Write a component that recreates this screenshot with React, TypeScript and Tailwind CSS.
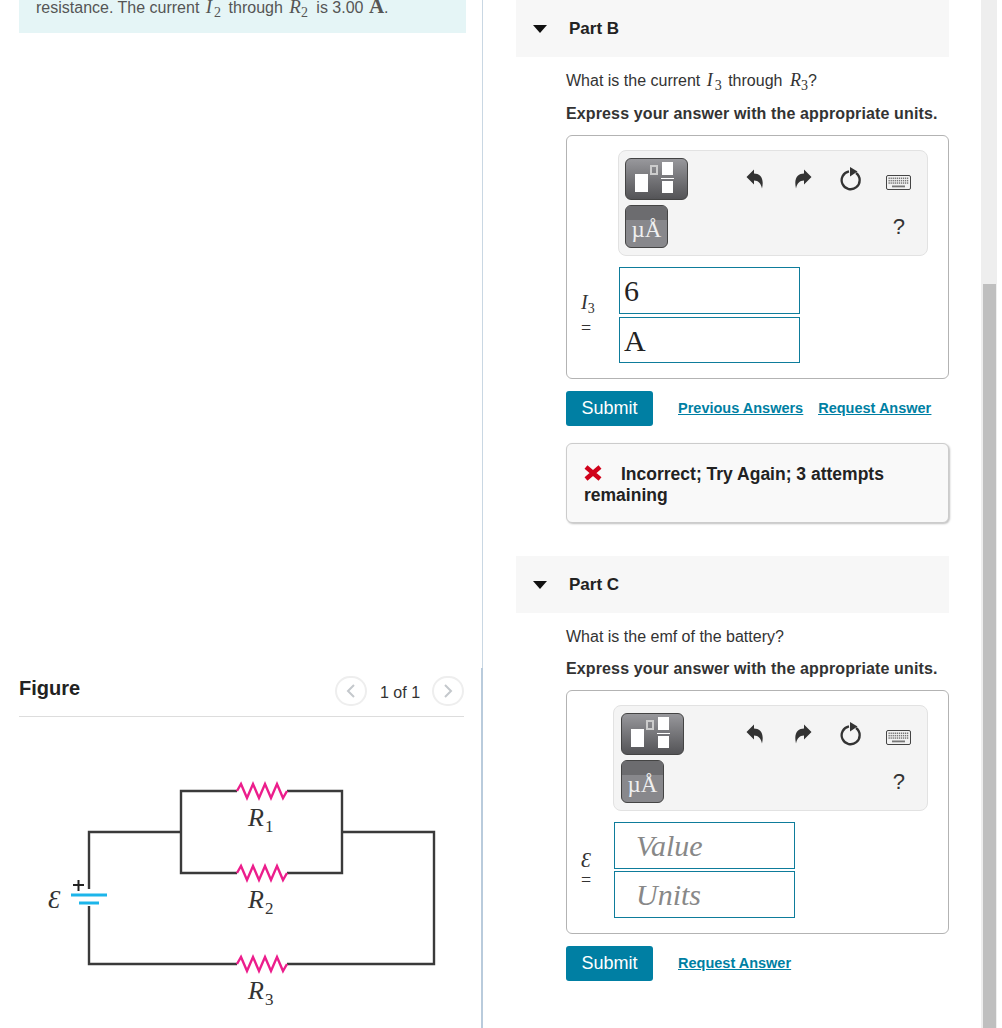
import { ReactNode } from 'react'

const serif = "font-['Liberation_Serif',serif]"

function UndoIcon({ flip = false }: { flip?: boolean }) {
  return (
    <svg width="18" height="20" viewBox="0 0 18 20" className={flip ? '-scale-x-100' : ''}>
      <path d="M0.5 8 L8 0.5 V4.5 C14 4.5 18.500 9 16 19.500 C15 14.500 12.500 11.500 8 11.500 V15.500 Z" fill="#333" />
    </svg>
  )
}

function ResetIcon() {
  return (
    <svg width="22" height="24" viewBox="0 0 22 24">
      <path d="M9 4.400 A9 9 0 1 0 16 6" fill="none" stroke="#333" strokeWidth="2.300" />
      <path d="M10 0 L17.500 4.500 L10 9.500 Z" fill="#333" />
    </svg>
  )
}

function KeyboardIcon() {
  const rows = [0, 1, 2]
  const keys = [0, 1, 2, 3, 4, 5, 6, 7, 8, 9]
  return (
    <svg width="25" height="15" viewBox="0 0 25 15" className="-ml-[2px] mt-[6px]">
      <rect x="0.5" y="0.5" width="24" height="14" rx="1.500" fill="#f2f2f2" stroke="#444" />
      {rows.map((r) =>
        keys.map((k) => <rect key={`${r}-${k}`} x={2.5 + k * 2.05} y={2.5 + r * 2.4} width="1.300" height="1.500" fill="#777" />),
      )}
      <rect x="6" y="10.500" width="13" height="1.800" fill="#777" />
    </svg>
  )
}

function FractionButton() {
  return (
    <div className="relative h-[42px] w-[63px] rounded-md border border-[#444] bg-linear-to-b from-[#98989c] to-[#545457]">
      <div className="absolute left-[9px] top-[15px] h-[18px] w-[13px] bg-white" />
      <div className="absolute left-[24px] top-[6px] h-[10px] w-[8px] border-2 border-[#ccc]" />
      <div className="absolute left-[36px] top-[3px] h-[13px] w-[11px] bg-white" />
      <div className="absolute left-[35px] top-[19px] h-px w-[13px] bg-white" />
      <div className="absolute left-[36px] top-[22px] h-[12px] w-[11px] bg-white" />
    </div>
  )
}

function UnitButton() {
  return (
    <div className="relative h-[43px] w-[43px] overflow-hidden rounded-md border border-[#444] bg-[#88888c]">
      <div className="h-[14px] bg-[#6c6c6f]" />
      <span className={`${serif} absolute inset-x-0 top-[10px] text-center text-[23px] leading-[28px] text-[#f0f0f0]`}>µÅ</span>
    </div>
  )
}

function Toolbar({ marginLeft, width, pad }: { marginLeft: string; width: string; pad: string }) {
  return (
    <div className={`${marginLeft} ${width} ${pad} mt-[14px] flex h-[106px] flex-col gap-[5px] rounded-lg border border-[#e2e2e2] bg-[#f4f4f4] pt-[7px]`}>
      <div className="flex items-center">
        <FractionButton />
        <div className="ml-auto mr-[4px] flex items-center">
          <div className="flex w-[48px] justify-center">
            <UndoIcon />
          </div>
          <div className="flex w-[48px] justify-center">
            <UndoIcon flip />
          </div>
          <div className="flex w-[48px] justify-center">
            <ResetIcon />
          </div>
          <div className="flex w-[48px] justify-center">
            <KeyboardIcon />
          </div>
        </div>
      </div>
      <div className="flex items-center">
        <UnitButton />
        <span className="ml-auto mr-[22px] text-[22px] text-[#333]">?</span>
      </div>
    </div>
  )
}

function Field({ children, muted = false, height }: { children: string; muted?: boolean; height: string }) {
  return (
    <div className={`${height} ${serif} flex w-[181px] items-center border border-[#0e7c9b] bg-white text-[30px] ${muted ? 'pl-[21px] italic text-[#888]' : 'pl-[4px] text-[#222]'}`}>
      {children}
    </div>
  )
}

function PartHeader({ title }: { title: string }) {
  return (
    <div className="flex h-[57px] items-center bg-[#f7f7f7] pl-[17px]">
      <svg width="14" height="8" viewBox="0 0 14 8">
        <path d="M0 0 H14 L7 8 Z" fill="#111" />
      </svg>
      <span className="ml-[22px] text-[17px] font-bold text-[#222]">{title}</span>
    </div>
  )
}

function Question({ children, gap }: { children: ReactNode; gap: string }) {
  return (
    <div className="ml-[50px] text-[16px] leading-[20px] text-[#333]">
      <p>{children}</p>
      <p className={`${gap} font-bold tracking-[0.13px]`}>Express your answer with the appropriate units.</p>
    </div>
  )
}

function SubmitRow({ previous = false }: { previous?: boolean }) {
  return (
    <div className="ml-[50px] mt-[12px] flex h-[35px] items-center">
      <button className="h-[35px] w-[87px] rounded-[3px] bg-[#007fa3] text-[18px] text-white">Submit</button>
      <div className="ml-[25px] flex gap-[15px] text-[14.5px] font-bold text-[#007fa3] underline">
        {previous && <a>Previous Answers</a>}
        <a>Request Answer</a>
      </div>
    </div>
  )
}

function Circuit() {
  const zig = (y: number) =>
    `M237 ${y} L241 ${y - 7} L247 ${y + 7} L253 ${y - 7} L259 ${y + 7} L265 ${y - 7} L271 ${y + 7} L277 ${y - 7} L283 ${y + 7} L287 ${y}`
  return (
    <svg width="460" height="311" viewBox="0 717 460 311" className="block">
      <g fill="none" stroke="#3a3a3a" strokeWidth="2.400">
        <path d="M237 791 H181 V873 H237 M287 791 H342 V873 H287" />
        <path d="M181 832 H89 V889 M89 906 V964 H237 M287 964 H434 V832 H342" />
      </g>
      <g fill="none" stroke="#ec1e8c" strokeWidth="2.400">
        <path d={zig(791)} />
        <path d={zig(873)} />
        <path d={zig(964)} />
      </g>
      <path d="M71 895 H107 M79 903 H99" stroke="#1cb5ea" strokeWidth="3" />
      <path d="M73 885 H84 M78.500 880 V891" stroke="#222" strokeWidth="2" />
      <g fontFamily="Liberation Serif" fill="#333">
        <text x="48" y="908" fontSize="25" fontStyle="italic">Ɛ</text>
        <text x="248" y="826" fontSize="26" fontStyle="italic">R</text>
        <text x="265" y="832" fontSize="17">1</text>
        <text x="248" y="908" fontSize="26" fontStyle="italic">R</text>
        <text x="265" y="914" fontSize="17">2</text>
        <text x="248" y="999" fontSize="26" fontStyle="italic">R</text>
        <text x="265" y="1005" fontSize="17">3</text>
      </g>
    </svg>
  )
}

function PagerButton({ dir }: { dir: 'left' | 'right' }) {
  return (
    <div className="flex h-[30px] w-[32px] items-center justify-center rounded-full border-2 border-[#eee]">
      <svg width="10" height="14" viewBox="0 0 10 14">
        <path d={dir === 'left' ? 'M8 1 L2 7 L8 13' : 'M2 1 L8 7 L2 13'} fill="none" stroke="#c4c8cc" strokeWidth="2" />
      </svg>
    </div>
  )
}

function LeftPane() {
  return (
    <div className="flex w-[481px] shrink-0 flex-col">
      <div className="ml-[19px] mr-[15px] h-[33px] overflow-hidden bg-[#e5f5f6] pl-[17px]">
        <p className="-mt-[4px] whitespace-nowrap text-[16px] leading-[21px] text-[#555]">
          resistance. The current <span className={`${serif} ml-[2px] text-[19px] italic`}>I</span>
          <sub className={`${serif} ml-[2px] mr-[3px] text-[14px]`}>2</sub> through{' '}
          <span className={`${serif} ml-[2px] text-[19px] italic`}>R</span>
          <sub className={`${serif} mr-[4px] text-[14px]`}>2</sub> is 3.00{' '}
          <span className={`${serif} ml-[1px] text-[21px] font-bold`}>A</span>.
        </p>
      </div>
      <div className="ml-[19px] mr-[17px] mt-[643px] flex h-[41px] items-start justify-between border-b border-[#ddd]">
        <span className="text-[20px] font-bold leading-[24px] text-[#222]">Figure</span>
        <div className="flex items-center gap-[13px] text-[16px] text-[#333]">
          <PagerButton dir="left" />
          <span className="w-[39px] translate-y-[2px] whitespace-nowrap">1 of 1</span>
          <PagerButton dir="right" />
        </div>
      </div>
      <Circuit />
    </div>
  )
}

function RightPane() {
  return (
    <div className="ml-[33px] flex w-[433px] shrink-0 flex-col">
      <PartHeader title="Part B" />
      <div className="mt-[13px]">
        <Question gap="mt-[13px]">
          What is the current <span className={`${serif} ml-[2px] text-[18px] italic`}>I</span>
          <sub className={`${serif} ml-[2px] mr-[2px] text-[14px]`}>3</sub> through{' '}
          <span className={`${serif} ml-[3px] text-[18px] italic`}>R</span>
          <sub className={`${serif} text-[14px]`}>3</sub>?
        </Question>
      </div>
      <div className="ml-[50px] mt-[11px] h-[244px] rounded-md border border-[#b3b3b3]">
        <Toolbar marginLeft="ml-[51px]" width="w-[310px]" pad="pl-[6px]" />
        <div className="ml-[14px] mt-[11px] flex items-center">
          <div className={`${serif} w-[38px] text-[20px] leading-[22px] text-[#333]`}>
            <div className="italic">
              I<sub className="text-[14px] not-italic">3</sub>
            </div>
            <div className="mt-[4px] text-[18px]">=</div>
          </div>
          <div className="flex flex-col gap-[3px]">
            <Field height="h-[47px]">6</Field>
            <Field height="h-[46px]">A</Field>
          </div>
        </div>
      </div>
      <SubmitRow previous />
      <div className="ml-[50px] mt-[17px] h-[80px] rounded-md border border-[#ccc] bg-[#f9f9f9] pl-[17px] pt-[20px] text-[17.5px] font-bold leading-[21px] text-[#222] shadow-[1px_1px_2px_rgba(0,0,0,0.25)]">
        <svg width="18" height="16" viewBox="0 0 18 16" className="mr-[19px] inline-block align-[-1px]">
          <path d="M2 2 L16 14 M16 2 L2 14" stroke="#d0021b" strokeWidth="4.500" />
        </svg>
        Incorrect; Try Again; 3 attempts remaining
      </div>
      <div className="mt-[33px]">
        <PartHeader title="Part C" />
      </div>
      <div className="mt-[14px]">
        <Question gap="mt-[12px]">What is the emf of the battery?</Question>
      </div>
      <div className="ml-[50px] mt-[11px] h-[244px] rounded-md border border-[#b3b3b3]">
        <Toolbar marginLeft="ml-[46px]" width="w-[315px]" pad="pl-[7px]" />
        <div className="ml-[14px] mt-[11px] flex items-center">
          <div className={`${serif} w-[33px] text-[20px] leading-[20px] text-[#333]`}>
            <div className="italic">Ɛ</div>
            <div className="text-[18px]">=</div>
          </div>
          <div className="flex flex-col gap-[2px]">
            <Field muted height="h-[47px]">Value</Field>
            <Field muted height="h-[47px]">Units</Field>
          </div>
        </div>
      </div>
      <SubmitRow />
    </div>
  )
}

export default function App() {
  return (
    <div className="flex h-[1028px] w-[1002px] overflow-hidden bg-white font-['Liberation_Sans',sans-serif]">
      <LeftPane />
      <div className="flex w-[2px] shrink-0 flex-col items-end">
        <div className="h-[668px] w-px bg-[#c9d7e3]" />
        <div className="w-[2px] flex-1 bg-[#b9cbdc]" />
      </div>
      <RightPane />
      <div className="ml-[32px] w-[16px] shrink-0 bg-[#eeeeee] pl-[2px] pr-px pt-[284px]">
        <div className="h-full bg-[#bfbfbf]" />
      </div>
    </div>
  )
}
